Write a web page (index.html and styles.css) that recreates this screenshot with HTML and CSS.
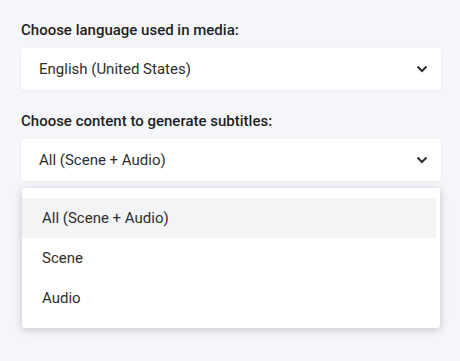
FILE: index.html
```html
<!DOCTYPE html>
<html lang="en">

<head>
  <meta charset="UTF-8">
  <title>Subtitles</title>
  <link rel="stylesheet" href="styles.css">
</head>

<body>
  <div class="panel">
    <div class="field">
      <label class="field-label">Choose language used in media:</label>
      <div class="select">
        <span class="select-value">English (United States)</span>
        <svg class="chevron" width="12" height="8" viewBox="0 0 12 8">
          <path d="M1.5 1.5 L6 6 L10.5 1.5" fill="none" stroke="#2b2b2b" stroke-width="2" />
        </svg>
      </div>
    </div>

    <div class="field">
      <label class="field-label">Choose content to generate subtitles:</label>
      <div class="select">
        <span class="select-value">All (Scene + Audio)</span>
        <svg class="chevron" width="12" height="8" viewBox="0 0 12 8">
          <path d="M1.5 1.5 L6 6 L10.5 1.5" fill="none" stroke="#2b2b2b" stroke-width="2" />
        </svg>
      </div>
      <ul class="menu">
        <li class="menu-item active">All (Scene + Audio)</li>
        <li class="menu-item">Scene</li>
        <li class="menu-item">Audio</li>
      </ul>
    </div>
  </div>
</body>

</html>
```

FILE: styles.css
```css
html,
body {
  margin: 0;
  height: 100%;
}

body {
  background-color: #f5f6fa;
  font-family: Roboto, "Noto Sans", Arial, sans-serif;
  color: #222;
}

.panel {
  padding: 20px 19px 0 21px;
}

.field + .field {
  margin-top: 21px;
}

.field-label {
  display: block;
  font-size: 15px;
  font-weight: 500;
  line-height: 20px;
  color: #1f1f1f;
  margin-bottom: 8px;
}

.select {
  height: 42px;
  display: flex;
  align-items: center;
  justify-content: space-between;
  padding: 0 13px 0 18px;
  background-color: #fff;
  border-radius: 3px;
  box-shadow: 0 1px 3px rgba(30, 40, 80, 0.06);
}

.select-value {
  font-size: 15px;
  color: #2e2e2e;
}

.chevron {
  display: block;
}

.menu {
  list-style: none;
  margin: 7px 1px 0 1px;
  padding: 10px 4px 10px 0;
  background-color: #fff;
  border-radius: 3px;
  box-shadow: 0 2px 8px rgba(20, 25, 50, 0.22);
}

.menu-item {
  height: 40px;
  line-height: 40px;
  padding-left: 20px;
  font-size: 15px;
  color: #2e2e2e;
}

.menu-item.active {
  background-color: #f3f4f6;
}
```
